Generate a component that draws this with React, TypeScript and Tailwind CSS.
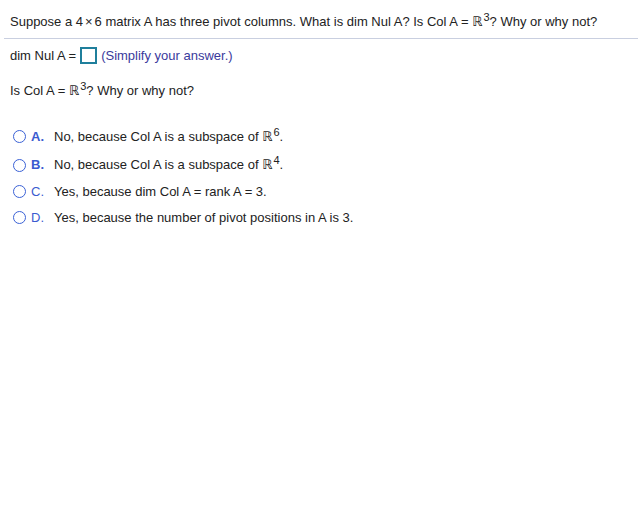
import React from "react";

const R = () => <span style={{ fontFamily: '"DejaVu Sans", sans-serif' }} className="text-[13px]">ℝ</span>;

function Sup({ children }: { children: React.ReactNode }) {
  return <sup className="text-[11px] top-[-5px] ml-[1px]">{children}</sup>;
}

function Option({ letter, bold, h, children }: { letter: string; bold?: boolean; h: string; children: React.ReactNode }) {
  return (
    <div className={`flex items-center ${h}`}>
      <span className="ml-[13px] w-[13px] h-[13px] rounded-full border border-[#3b62d6] bg-white shrink-0" />
      <span className={`ml-[5px] w-[23px] text-[#3b5bd0] ${bold ? "font-bold" : ""}`}>{letter}</span>
      <span>{children}</span>
    </div>
  );
}

export default function App() {
  return (
    <div className="w-[639px] h-[516px] bg-white text-[#222] text-[13px] leading-[16px]" style={{ fontFamily: '"Liberation Sans", Arial, sans-serif' }}>
      <div className="pt-[14px] pl-[10px] h-[38px]">
        Suppose a 4<span className="mx-[2px]">×</span>6 matrix A has three pivot columns. What is dim Nul A? Is Col A = <R /><Sup>3</Sup>? Why or why not?
      </div>
      <div className="ml-[4px] mr-[1px] h-px bg-[#c9cfe0]" />
      <div className="pl-[10px] pt-[8px] flex items-center">
        <span>dim Nul A =</span>
        <span className="ml-[4px] w-[17px] h-[17px] border-2 border-[#1f7f9c] inline-block" />
        <span className="ml-[4px] text-[#3a3a9c]">(Simplify your answer.)</span>
      </div>
      <div className="pl-[10px] pt-[19px]">
        Is Col A = <R /><Sup>3</Sup>? Why or why not?
      </div>
      <div className="pt-[22px]">
        <Option letter="A." bold h="h-[31px]">No, because Col A is a subspace of <R /><Sup>6</Sup>.</Option>
        <Option letter="B." bold h="h-[26px]">No, because Col A is a subspace of <R /><Sup>4</Sup>.</Option>
        <Option letter="C." h="h-[27px]">Yes, because dim Col A = rank A = 3.</Option>
        <Option letter="D." h="h-[25px]">Yes, because the number of pivot positions in A is 3.</Option>
      </div>
    </div>
  );
}
